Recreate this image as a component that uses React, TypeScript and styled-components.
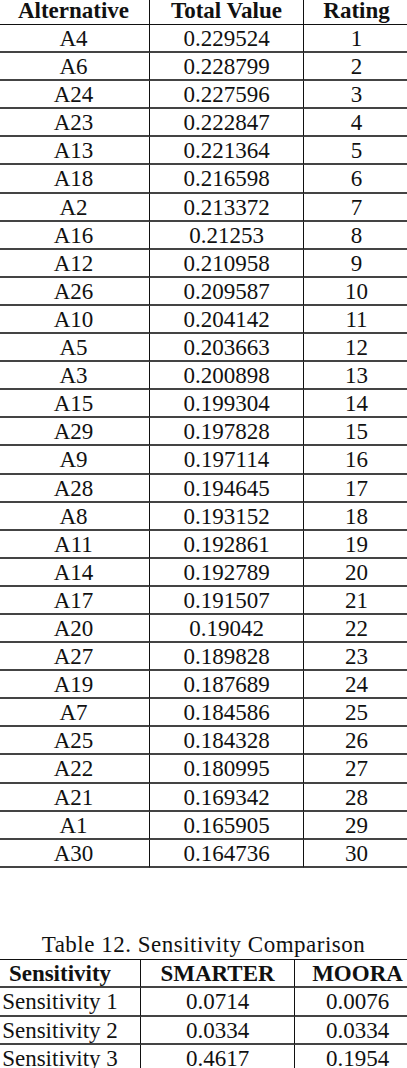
import * as React from 'react';
import styled, { createGlobalStyle } from 'styled-components';

const serif = '"Liberation Serif", "Times New Roman", Times, serif';

const GlobalStyle = createGlobalStyle`
  html, body {
    margin: 0;
    padding: 0;
    background: #fff;
    overflow: hidden;
  }
`;

const Page = styled.div`
  width: 407px;
  height: 1068px;
  overflow: hidden;
  font-family: ${serif};
  color: #111;
`;

const Table = styled.div<{ $cols: string; $shift: number }>`
  display: grid;
  grid-template-columns: ${(p) => p.$cols};
  grid-auto-rows: 28.1px;
  margin-left: ${(p) => p.$shift}px;
  width: max-content;
  font-size: 23px;
`;

const RankTable = styled(Table)`
  margin-top: -3.1px;
`;

const SensTable = styled(Table)`
  border-top: 1px solid #111;
`;

// body rules in the scan come out as a soft 2px grey line, the header rule is crisp
const Cell = styled.div<{ $head?: boolean; $divider?: boolean; $thin?: boolean }>`
  box-sizing: border-box;
  border-bottom: ${(p) => (p.$thin ? '1px solid #111' : '2px solid #444')};
  border-left: ${(p) => (p.$divider ? '1px solid #111' : 'none')};
  font-weight: ${(p) => (p.$head ? 700 : 400)};
  line-height: ${(p) => (p.$thin ? '27px' : '26px')};
  padding-top: ${(p) => (p.$thin ? '0' : '1px')};
  text-align: center;
  white-space: nowrap;
`;

const Caption = styled.div`
  margin-top: 63.5px;
  font-size: 23px;
  line-height: 28px;
  letter-spacing: 0.5px;
  text-align: center;
  white-space: nowrap;
`;

const ranking: [string, string, number][] = [
  ['A4', '0.229524', 1],
  ['A6', '0.228799', 2],
  ['A24', '0.227596', 3],
  ['A23', '0.222847', 4],
  ['A13', '0.221364', 5],
  ['A18', '0.216598', 6],
  ['A2', '0.213372', 7],
  ['A16', '0.21253', 8],
  ['A12', '0.210958', 9],
  ['A26', '0.209587', 10],
  ['A10', '0.204142', 11],
  ['A5', '0.203663', 12],
  ['A3', '0.200898', 13],
  ['A15', '0.199304', 14],
  ['A29', '0.197828', 15],
  ['A9', '0.197114', 16],
  ['A28', '0.194645', 17],
  ['A8', '0.193152', 18],
  ['A11', '0.192861', 19],
  ['A14', '0.192789', 20],
  ['A17', '0.191507', 21],
  ['A20', '0.19042', 22],
  ['A27', '0.189828', 23],
  ['A19', '0.187689', 24],
  ['A7', '0.184586', 25],
  ['A25', '0.184328', 26],
  ['A22', '0.180995', 27],
  ['A21', '0.169342', 28],
  ['A1', '0.165905', 29],
  ['A30', '0.164736', 30]
];

const sensitivity: [string, string, string][] = [
  ['Sensitivity 1', '0.0714', '0.0076'],
  ['Sensitivity 2', '0.0334', '0.0334'],
  ['Sensitivity 3', '0.4617', '0.1954']
];

interface RowProps {
  cells: (string | number)[];
  head?: boolean;
  thin?: boolean;
}

function Row({ cells, head, thin }: RowProps) {
  return (
    <>
      {cells.map((c, i) => (
        <Cell key={i} $head={head} $thin={thin} $divider={i > 0}>
          {c}
        </Cell>
      ))}
    </>
  );
}

export default function App() {
  return (
    <Page>
      <GlobalStyle />
      <RankTable $cols="151px 154px 106px" $shift={-2}>
        <Row head thin cells={['Alternative', 'Total Value', 'Rating']} />
        {ranking.map((r) => (
          <Row key={r[0]} cells={r} />
        ))}
      </RankTable>
      <Caption>Table 12. Sensitivity Comparison</Caption>
      <SensTable $cols="160px 154px 126px" $shift={-20}>
        <Row head cells={['Sensitivity', 'SMARTER', 'MOORA']} />
        {sensitivity.map((r) => (
          <Row key={r[0]} cells={r} />
        ))}
      </SensTable>
    </Page>
  );
}
